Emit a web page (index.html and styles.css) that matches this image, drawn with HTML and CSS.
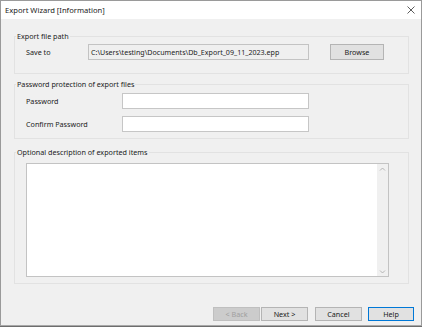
FILE: index.html
```html
<!DOCTYPE html>
<html>
<head>
<meta charset="utf-8">
<link rel="stylesheet" href="styles.css">
</head>
<body>
<div class="window">
  <div class="titlebar">
    <span class="title">Export Wizard [Information]</span>
    <svg class="close" width="8" height="8" viewBox="0 0 8 8"><path d="M0.5 0.5 L7.5 7.5 M7.5 0.5 L0.5 7.5" stroke="#333" stroke-width="0.8" fill="none"/></svg>
  </div>
  <div class="content">
    <fieldset class="group g1">
      <legend>Export file path</legend>
      <div class="row">
        <span class="label l1">Save to</span>
        <div class="path">C:\Users\testing\Documents\Db_Export_09_11_2023.epp</div>
        <div class="btn browse">Browse</div>
      </div>
    </fieldset>
    <fieldset class="group g2">
      <legend>Password protection of export files</legend>
      <div class="row">
        <span class="label l2">Password</span>
        <div class="input"></div>
      </div>
      <div class="row r2">
        <span class="label l2">Confirm Password</span>
        <div class="input"></div>
      </div>
    </fieldset>
    <fieldset class="group g3">
      <legend>Optional description of exported items</legend>
      <div class="textarea">
        <div class="text"></div>
        <div class="scroll">
          <svg width="7" height="5" viewBox="0 0 7 5"><path d="M1 3.5 L3.5 1 L6 3.5" stroke="#a6a6a6" stroke-width="0.8" fill="none"/></svg>
          <svg width="7" height="5" viewBox="0 0 7 5"><path d="M1 1.5 L3.5 4 L6 1.5" stroke="#a6a6a6" stroke-width="0.8" fill="none"/></svg>
        </div>
      </div>
    </fieldset>
    <div class="buttons">
      <div class="btn disabled">&lt; Back</div>
      <div class="btn next">Next &gt;</div>
      <div class="btn cancel">Cancel</div>
      <div class="btn help">Help</div>
    </div>
  </div>
</div>
</body>
</html>
```
FILE: styles.css
```css
html, body {
  margin: 0;
  padding: 0;
  background: #6d6d6d;
}
body {
  width: 422px;
  height: 327px;
  overflow: hidden;
  font-family: "Noto Sans", "Open Sans", sans-serif;
  font-size: 7.2px;
  color: #1a1a1a;
}
.window {
  width: 422px;
  height: 326px;
  box-sizing: border-box;
  border: 1px solid #9a9a9a;
  border-bottom-color: #a8a8a8;
  background: #f0f0f0;
  display: flex;
  flex-direction: column;
}
.titlebar {
  height: 18px;
  background: #ffffff;
  display: flex;
  align-items: center;
  justify-content: space-between;
  padding: 0 6px 0 4px;
  flex: none;
}
.title {
  font-size: 7.6px;
  color: #1a1a1a;
}
.close {
  display: block;
}
.content {
  flex: 1;
  padding: 12px 12px 0 13px;
  display: flex;
  flex-direction: column;
}
.group {
  margin: 0;
  padding: 0 10px 0 11px;
  border: 1px solid #e2e2e2;
  box-sizing: border-box;
  min-width: 0;
}
.group legend {
  padding: 0 1px;
  margin-left: -10px;
  line-height: 10px;
  height: 10px;
  font-size: 7.2px;
}
.g1 { height: 43px; padding-top: 3px; }
.g2 { height: 60px; margin-top: 5px; padding-top: 4px; }
.g3 { height: 137px; margin-top: 8px; padding-top: 6px; }
.row {
  display: flex;
  align-items: center;
  height: 16px;
}
.r2 { margin-top: 7px; }
.label { flex: none; }
.l1 { width: 62px; }
.l2 { width: 96px; }
.path {
  width: 221px;
  height: 16px;
  box-sizing: border-box;
  border: 1px solid #c3c3c3;
  background: #efefef;
  padding-left: 2px;
  line-height: 14px;
  font-size: 7.1px;
  color: #222;
  white-space: nowrap;
  overflow: hidden;
}
.input {
  width: 187px;
  height: 16px;
  box-sizing: border-box;
  border: 1px solid #c6c6c6;
  background: #ffffff;
}
.btn {
  height: 14px;
  box-sizing: border-box;
  border: 1px solid #b4b4b4;
  background: #e1e1e1;
  display: flex;
  align-items: center;
  justify-content: center;
  font-size: 7.2px;
  color: #1a1a1a;
  width: 47px;
}
.browse {
  margin-left: 21px;
  width: 54px;
  height: 16px;
}
.textarea {
  margin-left: 0;
  width: 363px;
  height: 114px;
  box-sizing: border-box;
  border: 1px solid #c3c3c3;
  background: #ffffff;
  display: flex;
}
.text { flex: 1; }
.scroll {
  width: 11px;
  background: #f0f0f0;
  display: flex;
  flex-direction: column;
  justify-content: space-between;
  align-items: center;
  padding: 3px 0 2px;
}
.scroll svg { display: block; }
.buttons {
  display: flex;
  justify-content: flex-end;
  margin-top: 23px;
  margin-right: -5px;
}
.btn.disabled {
  background: #cccccc;
  border-color: #bfbfbf;
  color: #a0a0a0;
}
.next { margin-left: 1px; }
.cancel { margin-left: 7px; }
.help {
  margin-left: 6px;
  border-color: #0078d7;
  width: 46px;
}
```
